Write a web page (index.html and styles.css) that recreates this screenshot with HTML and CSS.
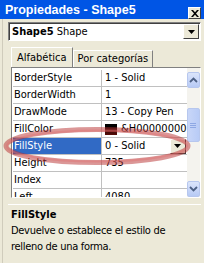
FILE: index.html
```html
<!DOCTYPE html>
<html>
<head>
<meta charset="utf-8">
<link rel="stylesheet" href="styles.css">
</head>
<body>
<div class="win">
  <div class="titlebar">
    <span class="title">Propiedades - Shape5</span>
    <span class="close">
      <svg width="8" height="7" viewBox="0 0 8 7"><path d="M0 0h2l2 2.3L6 0h2L5 3.5 8 7H6L4 4.7 2 7H0l3-3.5z" fill="#000"/></svg>
    </span>
  </div>
  <div class="body">
    <div class="combo">
      <span class="combo-text"><b>Shape5</b> Shape</span>
      <span class="combo-btn"><svg width="7" height="4" viewBox="0 0 7 4"><path d="M0 0h7L3.5 4z" fill="#000"/></svg></span>
    </div>
    <div class="tabs">
      <span class="tab active">Alfabética</span>
      <span class="tab">Por categorías</span>
    </div>
    <div class="sheet">
      <div class="grid">
        <div class="rows">
          <div class="row"><span class="name">BorderStyle</span><span class="val">1 - Solid</span></div>
          <div class="row"><span class="name">BorderWidth</span><span class="val">1</span></div>
          <div class="row"><span class="name">DrawMode</span><span class="val">13 - Copy Pen</span></div>
          <div class="row"><span class="name">FillColor</span><span class="val"><i class="swatch"></i>&amp;H00000000</span></div>
          <div class="row sel"><span class="name">FillStyle</span><span class="val">0 - Solid<span class="dd"><svg width="7" height="4" viewBox="0 0 7 4"><path d="M0 0h7L3.5 4z" fill="#000"/></svg></span></span></div>
          <div class="row"><span class="name">Height</span><span class="val">735</span></div>
          <div class="row"><span class="name">Index</span><span class="val"></span></div>
          <div class="row"><span class="name">Left</span><span class="val">4080</span></div>
        </div>
        <div class="scroll">
          <span class="sbtn"><svg width="9" height="6" viewBox="0 0 9 6"><path d="M1 5l3.5-3.5L8 5" stroke="#4d6185" stroke-width="1.8" fill="none"/></svg></span>
          <span class="track"><span class="thumb"><i></i><i></i><i></i></span></span>
          <span class="sbtn"><svg width="9" height="6" viewBox="0 0 9 6"><path d="M1 1l3.5 3.5L8 1" stroke="#4d6185" stroke-width="1.8" fill="none"/></svg></span>
        </div>
      </div>
    </div>
    <div class="desc">
      <div class="dtitle">FillStyle</div>
      <div class="dtext">Devuelve o establece el estilo de relleno de una forma.</div>
    </div>
  </div>
  <svg class="ring" width="188" height="38" viewBox="0 0 188 38">
    <ellipse cx="94" cy="19" rx="91" ry="16.5" fill="none" stroke="#b83030" stroke-opacity="0.5" stroke-width="5"/>
    <ellipse cx="94" cy="19" rx="90" ry="15.5" fill="none" stroke="#e07070" stroke-opacity="0.45" stroke-width="2"/>
  </svg>
</div>
</body>
</html>
```
FILE: styles.css
```css
html, body { margin: 0; padding: 0; }
body {
  width: 204px; height: 263px; overflow: hidden;
  background: #ece9d8;
  font-family: "DejaVu Sans", sans-serif;
  font-stretch: semi-condensed;
  font-size: 11px; color: #000;
}
.win { position: relative; height: 263px; }
.titlebar {
  height: 19px; background: #0055e5;
  display: flex; align-items: flex-end; justify-content: space-between;
  padding: 0 3px 0 5px; box-sizing: border-box;
}
.title { color: #fff; font-weight: bold; font-family: "Liberation Sans", sans-serif; font-size: 12.5px; line-height: 16px; padding-bottom: 1px; }
.close {
  width: 13px; height: 12px; background: #ece9d8; box-sizing: border-box;
  border: 1px solid; border-color: #fff #404040 #404040 #fff;
  display: flex; align-items: center; justify-content: center;
}
.body { padding: 3px 3px 0 5px; height: 244px; box-sizing: border-box; border-left: 1px solid #d0ccbc; margin-left: 2px; }
.combo {
  height: 19px; background: #fff; box-sizing: border-box;
  border: 1px solid; border-color: #808080 #fff #fff #808080;
  box-shadow: inset 1px 1px 0 #404040;
  display: flex; align-items: center; justify-content: space-between;
}
.combo-text { padding-left: 3px; }
.combo-btn {
  width: 16px; height: 15px; margin-right: 1px; background: #ece9d8;
  box-sizing: border-box; border: 1px solid; border-color: #fff #404040 #404040 #fff;
  display: flex; align-items: center; justify-content: center;
}
.tabs { display: flex; padding: 6px 0 0 3px; height: 26px; box-sizing: border-box; align-items: flex-end; }
.tab {
  height: 17px; padding: 0 4px; box-sizing: border-box;
  border: 1px solid #fff; border-right-color: #808080; border-bottom: none;
  line-height: 16px;
}
.tab.active { height: 20px; line-height: 19px; padding: 0 5px; }
.sheet { margin: 0 0 0 3px; }
.grid {
  display: flex; height: 131px; overflow: hidden; box-sizing: border-box;
  border: 1px solid; border-color: #808080 #fff #fff #808080;
  box-shadow: inset 1px 1px 0 #404040;
}
.rows { flex: 1; background: #fff; padding: 2px 0 0 1px; }
.row { display: flex; height: 16px; border-bottom: 1px solid #c0c0c0; line-height: 16px; }
.name { width: 87px; border-right: 1px solid #c0c0c0; padding-left: 1px; overflow: hidden; white-space: nowrap; }
.val { flex: 1; padding-left: 3px; display: flex; align-items: center; white-space: nowrap; overflow: hidden; }
.row.sel .name { background: #316ac5; color: #fff; }
.dd {
  margin-left: auto; margin-right: 1px; width: 16px; height: 15px; background: #ece9d8; box-sizing: border-box;
  border: 1px solid; border-color: #fff #404040 #404040 #fff;
  display: flex; align-items: center; justify-content: center;
}
.swatch { display: inline-block; width: 12px; height: 11px; background: linear-gradient(#000 30%, #5a0c08); margin-right: 4px; }
.scroll { width: 16px; background: #f4f3ee; display: flex; flex-direction: column; padding-top: 4px; }
.sbtn {
  height: 16px; box-sizing: border-box; border: 1px solid #b7c7ee; border-radius: 2px;
  background: linear-gradient(#dbe5fb, #b7caf5);
  display: flex; align-items: center; justify-content: center;
}
.track { flex: 1; padding: 0; display: flex; align-items: flex-start; }
.thumb {
  width: 100%; height: 34px; margin-top: 20px; box-sizing: border-box; border: 1px solid #b7c7ee; border-radius: 2px;
  background: linear-gradient(90deg, #c8d6f8, #b8cbf6);
  display: flex; flex-direction: column; align-items: center; justify-content: center; gap: 1px;
}
.thumb i { display: block; width: 6px; height: 1px; background: #8ea8e4; }
.desc { margin-top: 6px; padding: 2px 3px; border-top: 1px solid #fff; }
.dtitle { font-weight: bold; line-height: 16px; }
.dtext { line-height: 16px; letter-spacing: -0.3px; }
.ring { position: absolute; left: 3px; top: 127px; }
```
